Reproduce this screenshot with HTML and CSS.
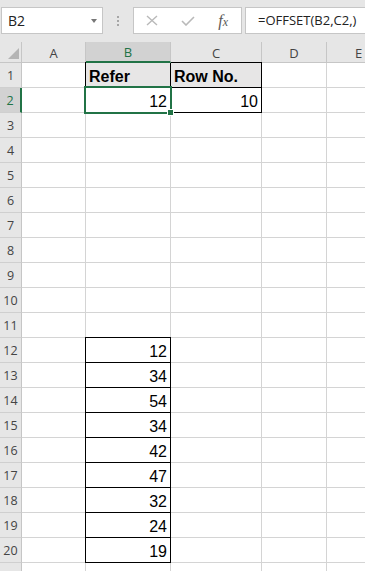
FILE: index.html
```html
<!DOCTYPE html>
<html lang="en">

<head>
    <meta charset="UTF-8">
    <meta name="viewport" content="width=device-width, initial-scale=1.0">
    <title>OFFSET</title>
    <link rel="stylesheet" href="styles.css">
</head>

<body>
    <div class="toolbar">
        <div class="namebox"><span>B2</span><span class="caret"></span></div>
        <div class="grip"><i></i><i></i><i></i></div>
        <div class="fxbox">
            <div class="tool">
                <svg width="12" height="11" viewBox="0 0 12 11">
                    <path d="M1 1L11 10M11 1L1 10" stroke="#b9b9b9" stroke-width="1.4" fill="none" />
                </svg>
            </div>
            <div class="tool">
                <svg width="14" height="10" viewBox="0 0 14 10">
                    <path d="M1 5L5 9L13 1" stroke="#b9b9b9" stroke-width="1.6" fill="none" />
                </svg>
            </div>
            <div class="tool fx">f<span>x</span></div>
        </div>
        <div class="formula">=OFFSET(B2,C2,)</div>
    </div>

    <div class="sheet">
        <div class="row head">
            <div class="corner"><span></span></div>
            <div>A</div>
            <div class="sel">B</div>
            <div>C</div>
            <div>D</div>
            <div>E</div>
        </div>
        <div class="row">
            <div class="rh">1</div>
            <div></div>
            <div class="box fill bold">Refer</div>
            <div class="box fill bold">Row No.</div>
            <div></div>
            <div></div>
        </div>
        <div class="row">
            <div class="rh sel">2</div>
            <div></div>
            <div class="box num active">12</div>
            <div class="box num">10</div>
            <div></div>
            <div></div>
        </div>
        <div class="row"><div class="rh">3</div><div></div><div></div><div></div><div></div><div></div></div>
        <div class="row"><div class="rh">4</div><div></div><div></div><div></div><div></div><div></div></div>
        <div class="row"><div class="rh">5</div><div></div><div></div><div></div><div></div><div></div></div>
        <div class="row"><div class="rh">6</div><div></div><div></div><div></div><div></div><div></div></div>
        <div class="row"><div class="rh">7</div><div></div><div></div><div></div><div></div><div></div></div>
        <div class="row"><div class="rh">8</div><div></div><div></div><div></div><div></div><div></div></div>
        <div class="row"><div class="rh">9</div><div></div><div></div><div></div><div></div><div></div></div>
        <div class="row"><div class="rh">10</div><div></div><div></div><div></div><div></div><div></div></div>
        <div class="row"><div class="rh">11</div><div></div><div></div><div></div><div></div><div></div></div>
        <div class="row"><div class="rh">12</div><div></div><div class="box num">12</div><div></div><div></div><div></div></div>
        <div class="row"><div class="rh">13</div><div></div><div class="box num">34</div><div></div><div></div><div></div></div>
        <div class="row"><div class="rh">14</div><div></div><div class="box num">54</div><div></div><div></div><div></div></div>
        <div class="row"><div class="rh">15</div><div></div><div class="box num">34</div><div></div><div></div><div></div></div>
        <div class="row"><div class="rh">16</div><div></div><div class="box num">42</div><div></div><div></div><div></div></div>
        <div class="row"><div class="rh">17</div><div></div><div class="box num">47</div><div></div><div></div><div></div></div>
        <div class="row"><div class="rh">18</div><div></div><div class="box num">32</div><div></div><div></div><div></div></div>
        <div class="row"><div class="rh">19</div><div></div><div class="box num">24</div><div></div><div></div><div></div></div>
        <div class="row"><div class="rh">20</div><div></div><div class="box num">19</div><div></div><div></div><div></div></div>
        <div class="row"><div class="rh"></div><div></div><div></div><div></div><div></div><div></div></div>
    </div>
</body>

</html>
```

FILE: styles.css
```css
body {
    margin: 0;
    width: 365px;
    height: 571px;
    overflow: hidden;
    background: #fff;
    font-family: "Open Sans", "Noto Sans", sans-serif;
}

/* formula bar */
.toolbar {
    display: flex;
    align-items: flex-start;
    height: 42px;
    box-sizing: border-box;
    padding: 7px 0 0 1px;
    background: #e6e6e6;
}

.namebox {
    display: flex;
    align-items: center;
    justify-content: space-between;
    width: 102px;
    height: 27px;
    box-sizing: border-box;
    padding: 0 5px 0 6px;
    background: #fff;
    border: 1px solid #c6c6c6;
    font-size: 14px;
    color: #222;
}

.caret {
    width: 0;
    height: 0;
    border-left: 3px solid transparent;
    border-right: 3px solid transparent;
    border-top: 4px solid #777;
}

.grip {
    display: flex;
    flex-direction: column;
    align-items: center;
    justify-content: center;
    gap: 2px;
    width: 30px;
    height: 27px;
}

.grip i {
    width: 2px;
    height: 2px;
    background: #a6a6a6;
}

.fxbox {
    display: flex;
    width: 109px;
    height: 27px;
    box-sizing: border-box;
    background: #fff;
    border: 1px solid #c6c6c6;
}

.tool {
    display: flex;
    align-items: center;
    justify-content: center;
    width: 36px;
}

.fx {
    font-family: "Liberation Serif", serif;
    font-style: italic;
    font-size: 16px;
    color: #5a5a5a;
}

.fx span {
    font-size: 12px;
    margin-top: 3px;
}

.formula {
    flex: 1;
    height: 27px;
    box-sizing: border-box;
    margin: 0 -6px 0 3px;
    padding-left: 12px;
    background: #fff;
    border: 1px solid #c6c6c6;
    font-size: 13px;
    line-height: 25px;
    color: #222;
}

/* grid */
.sheet {
    overflow: hidden;
}

.row {
    display: grid;
    grid-template-columns: 22px 64px 85px 91px 65px 64px;
    height: 25px;
}

.row > div {
    display: flex;
    align-items: flex-end;
    padding: 0 3px 1px;
    border-right: 1px solid #d4d4d4;
    border-bottom: 1px solid #d4d4d4;
    font-family: "Liberation Sans", Arial, sans-serif;
    font-size: 16px;
    line-height: 18px;
    color: #000;
}

.row.head {
    height: 21px;
}

.row.head > div {
    justify-content: center;
    align-items: center;
    padding: 1px 0 0;
    background: #e6e6e6;
    border-right-color: #c6c6c6;
    border-bottom-color: #c6c6c6;
    font-family: "Open Sans", "Noto Sans", sans-serif;
    font-size: 13px;
    color: #444;
}

.row.head > .corner {
    justify-content: flex-end;
    align-items: flex-end;
    padding: 0 2px 3px 0;
}

.corner span {
    width: 0;
    height: 0;
    border-left: 11px solid transparent;
    border-bottom: 11px solid #b4b4b4;
}

.row > .rh {
    justify-content: center;
    align-items: center;
    padding: 2px 0 0;
    background: #e6e6e6;
    border-right-color: #c6c6c6;
    border-bottom-color: #cfcfcf;
    font-family: "Open Sans", "Noto Sans", sans-serif;
    font-size: 12.5px;
    color: #444;
}

.row.head > .sel {
    position: relative;
    background: #d2d2d2;
    border-bottom: 2px solid #217346;
    color: #217346;
}

.row > .rh.sel {
    background: #d2d2d2;
    border-right: 2px solid #217346;
    color: #217346;
}

.row > .box {
    border-right-color: #000;
    border-bottom-color: #000;
    box-shadow: -1px 0 #000, 0 -1px #000, -1px -1px #000;
}

.row > .fill {
    background: #e7e6e6;
}

.bold {
    font-weight: bold;
}

.row > .num {
    justify-content: flex-end;
}

.active {
    position: relative;
}

.active::before {
    content: "";
    position: absolute;
    top: -2px;
    left: -2px;
    right: -2px;
    bottom: -2px;
    border: 2px solid #217346;
    z-index: 2;
}

.active::after {
    content: "";
    position: absolute;
    right: -4px;
    bottom: -4px;
    width: 5px;
    height: 5px;
    background: #217346;
    border: 1px solid #fff;
    z-index: 3;
}
```
